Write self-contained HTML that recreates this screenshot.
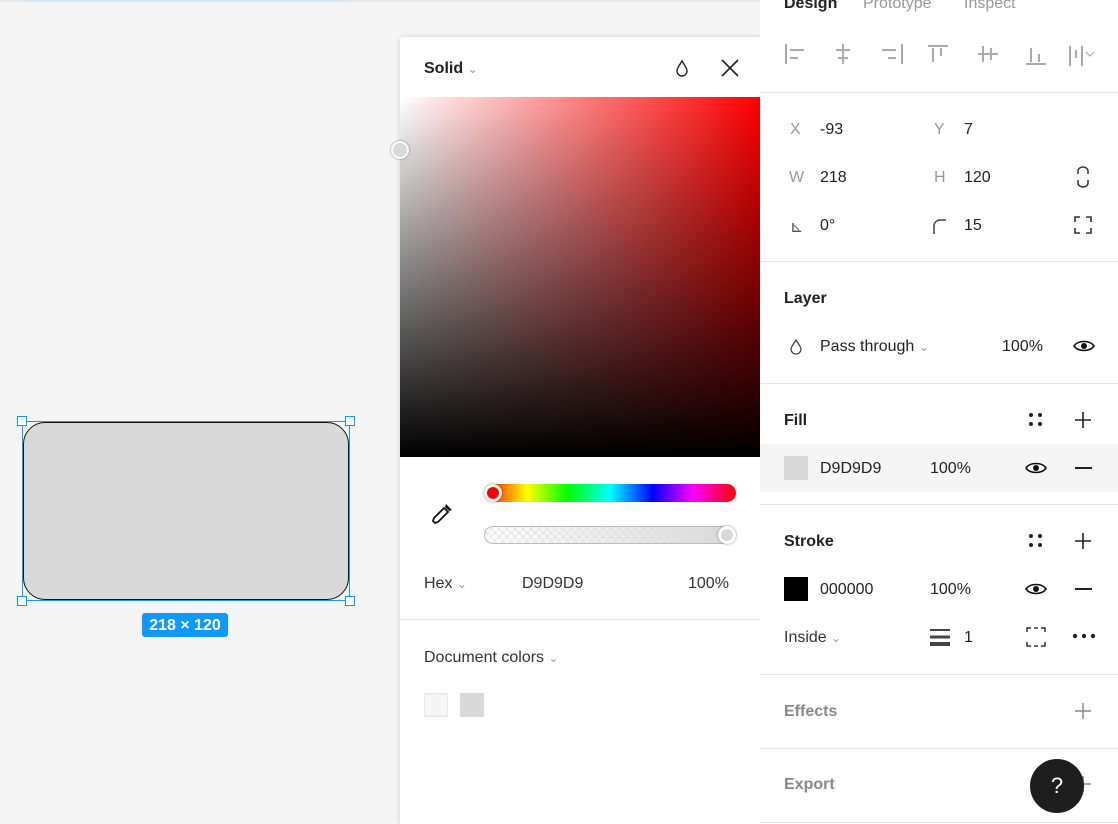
<!DOCTYPE html>
<html style="overflow:hidden;height:824px"><head><style>
*{box-sizing:border-box;margin:0;padding:0}
body{width:1118px;height:824px;overflow:hidden;background:#f5f5f5;font-family:"Liberation Sans",sans-serif;font-size:16px;color:#222;position:relative}
.a{position:absolute}
.g{color:#999}
.hr{position:absolute;left:760px;width:358px;height:1px;background:#e6e6e6}
</style></head><body>
<div class="a" style="left:0;top:0;width:760px;height:2px;background:#e8e8e8"></div>
<div class="a" style="left:22px;top:0;width:326px;height:2px;background:#dbe9f7"></div>

<div class="a" style="left:22px;top:421px;width:328px;height:180px;border:1px solid #0d99ff"></div>
<div class="a" style="left:23px;top:422px;width:326px;height:178px;background:#d9d9d9;border:1px solid #111;border-radius:22px"></div>
<div class="a" style="left:17px;top:416px;width:10px;height:10px;background:#fff;border:1px solid #0d99ff"></div>
<div class="a" style="left:345px;top:416px;width:10px;height:10px;background:#fff;border:1px solid #0d99ff"></div>
<div class="a" style="left:17px;top:596px;width:10px;height:10px;background:#fff;border:1px solid #0d99ff"></div>
<div class="a" style="left:345px;top:596px;width:10px;height:10px;background:#fff;border:1px solid #0d99ff"></div>
<div class="a" style="left:142px;top:613px;width:86px;height:24px;background:#0d99ff;color:#fff;border-radius:3px;text-align:center;line-height:25px;font-size:16px;font-weight:bold">218 × 120</div>

<div class="a" style="left:400px;top:37px;width:360px;height:787px;overflow:hidden;background:#fff;box-shadow:0 0 6px rgba(0,0,0,.15);border-radius:3px 0 0 0">
 <div class="a" style="left:24px;top:23px;font-weight:bold">Solid <span class="g" style="font-weight:normal;font-size:12px">⌄</span></div>
 <svg class="a" style="left:274px;top:22px" width="16" height="18"><path d="M8 2 C5 7 3 9 3 12 a5 5 0 0 0 10 0 C13 9 11 7 8 2Z" fill="none" stroke="#222" stroke-width="1.4"/></svg>
 <svg class="a" style="left:321px;top:22px" width="18" height="18"><path d="M1 1L17 17M17 1L1 17" stroke="#222" stroke-width="1.6"/></svg>
 <div class="a" style="left:0;top:60px;width:360px;height:360px;background:linear-gradient(to top,#000,rgba(0,0,0,0)),linear-gradient(to right,#fff,#f00)"></div>
 <svg class="a" style="left:30px;top:465px" width="24" height="24"><path d="M16 2l6 6-3 1-4-4z" fill="#111"/><path d="M14 6l4 4-10 10-3 1-2 -2 1-3z" fill="none" stroke="#111" stroke-width="1.8"/></svg>
 <div class="a" style="left:84px;top:447px;width:252px;height:18px;border-radius:9px;background:linear-gradient(to right,#f00,#ff0 17%,#0f0 33%,#0ff 50%,#00f 67%,#f0f 83%,#f00)"></div>
 <div class="a" style="left:84px;top:447px;width:18px;height:18px;border-radius:50%;border:3px solid #fff;background:#f00;box-shadow:0 0 2px rgba(0,0,0,.5)"></div>
 <div class="a" style="left:84px;top:489px;width:252px;height:18px;border-radius:9px;border:1px solid #bbb;background:linear-gradient(to right,rgba(217,217,217,0),#d9d9d9),repeating-conic-gradient(#eee 0 25%,#fff 0 50%) 0 0/8px 8px"></div>
 <div class="a" style="left:318px;top:489px;width:18px;height:18px;border-radius:50%;border:3px solid #fff;background:#d9d9d9;box-shadow:0 0 2px rgba(0,0,0,.5)"></div>
 <div class="a" style="left:24px;top:538px;color:#333">Hex <span class="g" style="font-size:12px">⌄</span></div>
 <div class="a" style="left:122px;top:538px;color:#333">D9D9D9</div>
 <div class="a" style="left:288px;top:538px;color:#333">100%</div>
 <div class="a" style="left:0;top:582px;width:360px;height:1px;background:#e6e6e6"></div>
 <div class="a" style="left:24px;top:612px;color:#333">Document colors <span class="g" style="font-size:12px">⌄</span></div>
 <div class="a" style="left:24px;top:656px;width:24px;height:24px;background:#f5f5f5;border:1px solid #e6e6e6"></div>
 <div class="a" style="left:60px;top:656px;width:24px;height:24px;background:#d9d9d9"></div>
</div>
<div class="a" style="left:391px;top:141px;width:18px;height:18px;border-radius:50%;border:2px solid #fff;background:#d9d9d9;box-shadow:0 0 2px rgba(0,0,0,.5)"></div>

<div class="a" style="left:760px;top:0;width:358px;height:824px;background:#fff"></div>
<div class="a" style="left:784px;top:-5px;font-weight:bold">Design</div>
<div class="a g" style="left:863px;top:-5px">Prototype</div>
<div class="a g" style="left:964px;top:-5px">Inspect</div>
<svg class="a" style="left:784px;top:42px" width="330" height="26" fill="none" stroke="#aaa" stroke-width="2">
<path d="M2 2v20M6 8h14M6 16h8"/><path d="M59 2v20M52 8h14M54 16h10"/><path d="M118 2v20M98 8h14M104 16h8"/>
<path d="M144 4h20M149 6v14M157 6v8"/><path d="M194 12h20M199 4v16M207 6v12"/><path d="M242 22h20M247 6v14M255 12v8"/>
<path d="M286 4v20M292 8v8M298 4v20"/><path d="M302 10l4 4 4-4" stroke-width="1.2"/></svg>
<div class="hr" style="top:92px"></div>
<div class="a g" style="left:790px;top:121px">X</div><div class="a" style="left:820px;top:121px">-93</div>
<div class="a g" style="left:934px;top:121px">Y</div><div class="a" style="left:964px;top:121px">7</div>
<div class="a g" style="left:789px;top:169px">W</div><div class="a" style="left:820px;top:169px">218</div>
<div class="a g" style="left:934px;top:169px">H</div><div class="a" style="left:964px;top:169px">120</div>
<svg class="a" style="left:1076px;top:166px" width="14" height="22" fill="none" stroke="#333" stroke-width="1.5"><path d="M2 8V5a5 4 0 0 1 10 0v3M2 14v3a5 4 0 0 0 10 0v-3"/></svg>
<div class="a" style="left:790px;top:217px;color:#555">⊾</div><div class="a" style="left:820px;top:217px">0°</div>
<svg class="a" style="left:932px;top:218px" width="16" height="16" fill="none" stroke="#444" stroke-width="1.5"><path d="M2 16V8a6 6 0 0 1 6-6h6"/></svg>
<div class="a" style="left:964px;top:217px">15</div>
<svg class="a" style="left:1074px;top:216px" width="18" height="18" fill="none" stroke="#333" stroke-width="1.6"><path d="M1 6V1h5M12 1h5v5M17 12v5h-5M6 17H1v-5"/></svg>
<div class="hr" style="top:261px"></div>
<div class="a" style="left:784px;top:290px;font-weight:bold">Layer</div>
<svg class="a" style="left:789px;top:338px" width="14" height="18"><path d="M7 2C4 7 2 9 2 11a5 5 0 0 0 10 0C12 9 10 7 7 2Z" fill="none" stroke="#444" stroke-width="1.3"/></svg>
<div class="a" style="left:820px;top:338px">Pass through <span class="g" style="font-size:12px">⌄</span></div>
<div class="a" style="left:1002px;top:338px">100%</div>
<svg class="a" style="left:1073px;top:338px" width="22" height="16"><path d="M1 8C5 2 17 2 21 8C17 14 5 14 1 8Z" fill="none" stroke="#111" stroke-width="1.6"/><circle cx="11" cy="8" r="3" fill="#111"/></svg>
<div class="hr" style="top:383px"></div>
<div class="a" style="left:784px;top:412px;font-weight:bold">Fill</div>
<svg class="a" style="left:1028px;top:412px" width="16" height="16" fill="#222"><circle cx="3" cy="3" r="2"/><circle cx="12" cy="3" r="2"/><circle cx="3" cy="12" r="2"/><circle cx="12" cy="12" r="2"/></svg>
<svg class="a" style="left:1074px;top:411px" width="18" height="18" stroke="#222" stroke-width="1.6"><path d="M9 1v16M1 9h16"/></svg>
<div class="a" style="left:760px;top:444px;width:358px;height:48px;background:#f5f5f5"></div>
<div class="a" style="left:784px;top:456px;width:24px;height:24px;background:#d9d9d9"></div>
<div class="a" style="left:820px;top:460px">D9D9D9</div><div class="a" style="left:930px;top:460px">100%</div>
<svg class="a" style="left:1025px;top:460px" width="22" height="16"><path d="M1 8C5 2 17 2 21 8C17 14 5 14 1 8Z" fill="none" stroke="#111" stroke-width="1.6"/><circle cx="11" cy="8" r="3" fill="#111"/></svg>
<div class="a" style="left:1075px;top:467px;width:17px;height:1.6px;background:#222"></div>
<div class="hr" style="top:504px"></div>
<div class="a" style="left:784px;top:533px;font-weight:bold">Stroke</div>
<svg class="a" style="left:1028px;top:533px" width="16" height="16" fill="#222"><circle cx="3" cy="3" r="2"/><circle cx="12" cy="3" r="2"/><circle cx="3" cy="12" r="2"/><circle cx="12" cy="12" r="2"/></svg>
<svg class="a" style="left:1074px;top:532px" width="18" height="18" stroke="#222" stroke-width="1.6"><path d="M9 1v16M1 9h16"/></svg>
<div class="a" style="left:784px;top:577px;width:24px;height:24px;background:#000"></div>
<div class="a" style="left:820px;top:581px">000000</div><div class="a" style="left:930px;top:581px">100%</div>
<svg class="a" style="left:1025px;top:581px" width="22" height="16"><path d="M1 8C5 2 17 2 21 8C17 14 5 14 1 8Z" fill="none" stroke="#111" stroke-width="1.6"/><circle cx="11" cy="8" r="3" fill="#111"/></svg>
<div class="a" style="left:1075px;top:588px;width:17px;height:1.6px;background:#222"></div>
<div class="a" style="left:784px;top:629px;color:#333">Inside <span class="g" style="font-size:12px">⌄</span></div>
<svg class="a" style="left:930px;top:627px" width="20" height="20" stroke="#444"><path d="M0 3h20" stroke-width="2"/><path d="M0 10h20" stroke-width="3"/><path d="M0 17h20" stroke-width="4"/></svg>
<div class="a" style="left:964px;top:629px">1</div>
<svg class="a" style="left:1026px;top:627px" width="20" height="20" fill="none" stroke="#333" stroke-width="1.5"><path d="M1 5V1h4M15 1h4v4M19 15v4h-4M5 19H1v-4M8 1h4M8 19h4"/></svg>
<svg class="a" style="left:1072px;top:633px" width="24" height="6" fill="#222"><circle cx="3" cy="3" r="2.2"/><circle cx="12" cy="3" r="2.2"/><circle cx="21" cy="3" r="2.2"/></svg>
<div class="hr" style="top:674px"></div>
<div class="a" style="left:784px;top:703px;font-weight:bold;color:#888">Effects</div>
<svg class="a" style="left:1074px;top:702px" width="18" height="18" stroke="#888" stroke-width="1.5"><path d="M9 1v16M1 9h16"/></svg>
<div class="hr" style="top:748px"></div>
<div class="a" style="left:784px;top:776px;font-weight:bold;color:#888">Export</div>
<svg class="a" style="left:1074px;top:775px" width="18" height="18" stroke="#888" stroke-width="1.5"><path d="M9 1v16M1 9h16"/></svg>
<div class="hr" style="top:822px"></div>
<div class="a" style="left:1030px;top:759px;width:54px;height:54px;border-radius:50%;background:#1e1e1e;color:#fff;text-align:center;line-height:54px;font-size:22px">?</div>
</body></html>
